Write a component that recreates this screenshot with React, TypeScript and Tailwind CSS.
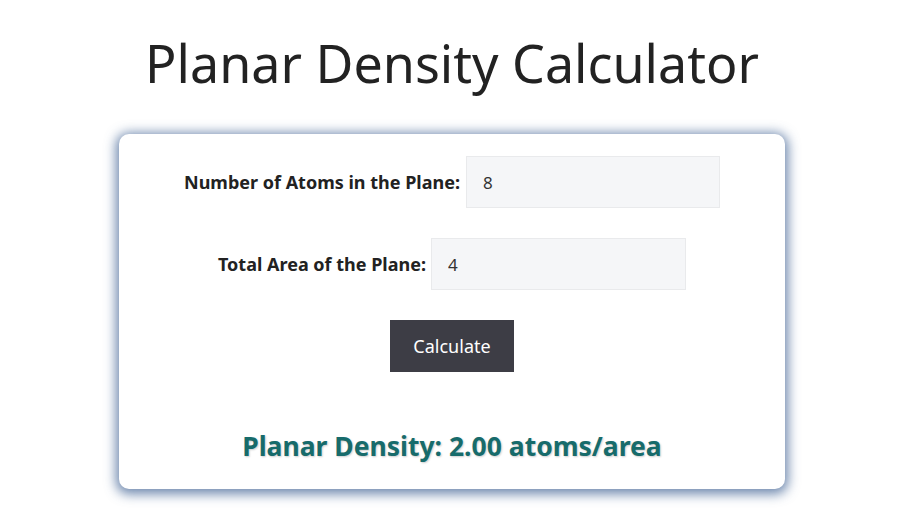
import React, { useState } from "react";

export default function App() {
  const [atoms, setAtoms] = useState("8");
  const [area, setArea] = useState("4");
  const [result, setResult] = useState<number | null>(2);

  const calculate = () => {
    const a = parseFloat(atoms);
    const b = parseFloat(area);
    if (!isNaN(a) && !isNaN(b) && b !== 0) setResult(a / b);
  };

  return (
    <div className="min-h-screen bg-white flex flex-col items-center font-['Noto_Sans',sans-serif] text-[#212529]">
      {/* Title */}
      <h1 className="mt-[23px] text-[52px] leading-[80px] font-normal text-[#222]">
        Planar Density Calculator
      </h1>

      {/* Card */}
      <div className="mt-[31px] w-[666px] h-[355px] rounded-[10px] bg-white shadow-[0_2px_12px_3px_rgba(60,95,145,0.75)] flex flex-col items-center pt-[22px]">
        <div className="flex items-center gap-[6px]">
          <label className="text-[18px] font-bold text-[#222]">Number of Atoms in the Plane:</label>
          <input
            value={atoms}
            onChange={(e) => setAtoms(e.target.value)}
            className="w-[254px] h-[52px] px-4 bg-[#f5f6f8] border border-[#e9eaec] text-[17px] text-[#333] outline-none"
          />
        </div>

        <div className="flex items-center gap-[5px] mt-[30px]">
          <label className="text-[18px] font-bold text-[#222]">Total Area of the Plane:</label>
          <input
            value={area}
            onChange={(e) => setArea(e.target.value)}
            className="w-[255px] h-[52px] px-4 bg-[#f5f6f8] border border-[#e9eaec] text-[17px] text-[#333] outline-none"
          />
        </div>

        <button
          onClick={calculate}
          className="mt-[30px] w-[124px] h-[52px] bg-[#3d3d45] text-white text-[18px]"
        >
          Calculate
        </button>

        {result !== null && (
          <div className="mt-[56px] text-[26.5px] leading-[36px] font-bold text-[#176b6b] [text-shadow:1px_1px_2px_rgba(0,0,0,0.2)]">
            Planar Density: {result.toFixed(2)} atoms/area
          </div>
        )}
      </div>
    </div>
  );
}
